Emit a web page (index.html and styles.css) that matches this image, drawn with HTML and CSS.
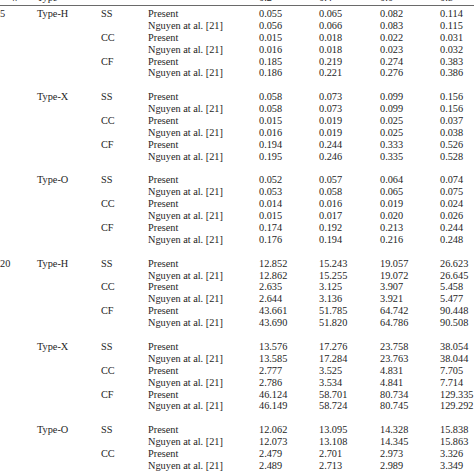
FILE: index.html
```html
<!DOCTYPE html>
<html>
<head>
<meta charset="utf-8">
<link rel="stylesheet" href="styles.css">
</head>
<body>
<div class="table">
  <div class="head">
    <span class="c">w</span><span class="c">Type</span><span class="c"></span><span class="c"></span>
    <span class="c">0.2</span><span class="c">0.4</span><span class="c">0.6</span><span class="c">0.8</span>
  </div>
  <div class="body">
    <span>5</span><span>Type-H</span><span>SS</span><span>Present</span><span>0.055</span><span>0.065</span><span>0.082</span><span>0.114</span>
    <span></span><span></span><span></span><span>Nguyen at al. [21]</span><span>0.056</span><span>0.066</span><span>0.083</span><span>0.115</span>
    <span></span><span></span><span>CC</span><span>Present</span><span>0.015</span><span>0.018</span><span>0.022</span><span>0.031</span>
    <span></span><span></span><span></span><span>Nguyen at al. [21]</span><span>0.016</span><span>0.018</span><span>0.023</span><span>0.032</span>
    <span></span><span></span><span>CF</span><span>Present</span><span>0.185</span><span>0.219</span><span>0.274</span><span>0.383</span>
    <span></span><span></span><span></span><span>Nguyen at al. [21]</span><span>0.186</span><span>0.221</span><span>0.276</span><span>0.386</span>
    <div class="gap"></div>
    <span></span><span>Type-X</span><span>SS</span><span>Present</span><span>0.058</span><span>0.073</span><span>0.099</span><span>0.156</span>
    <span></span><span></span><span></span><span>Nguyen at al. [21]</span><span>0.058</span><span>0.073</span><span>0.099</span><span>0.156</span>
    <span></span><span></span><span>CC</span><span>Present</span><span>0.015</span><span>0.019</span><span>0.025</span><span>0.037</span>
    <span></span><span></span><span></span><span>Nguyen at al. [21]</span><span>0.016</span><span>0.019</span><span>0.025</span><span>0.038</span>
    <span></span><span></span><span>CF</span><span>Present</span><span>0.194</span><span>0.244</span><span>0.333</span><span>0.526</span>
    <span></span><span></span><span></span><span>Nguyen at al. [21]</span><span>0.195</span><span>0.246</span><span>0.335</span><span>0.528</span>
    <div class="gap"></div>
    <span></span><span>Type-O</span><span>SS</span><span>Present</span><span>0.052</span><span>0.057</span><span>0.064</span><span>0.074</span>
    <span></span><span></span><span></span><span>Nguyen at al. [21]</span><span>0.053</span><span>0.058</span><span>0.065</span><span>0.075</span>
    <span></span><span></span><span>CC</span><span>Present</span><span>0.014</span><span>0.016</span><span>0.019</span><span>0.024</span>
    <span></span><span></span><span></span><span>Nguyen at al. [21]</span><span>0.015</span><span>0.017</span><span>0.020</span><span>0.026</span>
    <span></span><span></span><span>CF</span><span>Present</span><span>0.174</span><span>0.192</span><span>0.213</span><span>0.244</span>
    <span></span><span></span><span></span><span>Nguyen at al. [21]</span><span>0.176</span><span>0.194</span><span>0.216</span><span>0.248</span>
    <div class="gap"></div>
    <span>20</span><span>Type-H</span><span>SS</span><span>Present</span><span>12.852</span><span>15.243</span><span>19.057</span><span>26.623</span>
    <span></span><span></span><span></span><span>Nguyen at al. [21]</span><span>12.862</span><span>15.255</span><span>19.072</span><span>26.645</span>
    <span></span><span></span><span>CC</span><span>Present</span><span>2.635</span><span>3.125</span><span>3.907</span><span>5.458</span>
    <span></span><span></span><span></span><span>Nguyen at al. [21]</span><span>2.644</span><span>3.136</span><span>3.921</span><span>5.477</span>
    <span></span><span></span><span>CF</span><span>Present</span><span>43.661</span><span>51.785</span><span>64.742</span><span>90.448</span>
    <span></span><span></span><span></span><span>Nguyen at al. [21]</span><span>43.690</span><span>51.820</span><span>64.786</span><span>90.508</span>
    <div class="gap"></div>
    <span></span><span>Type-X</span><span>SS</span><span>Present</span><span>13.576</span><span>17.276</span><span>23.758</span><span>38.054</span>
    <span></span><span></span><span></span><span>Nguyen at al. [21]</span><span>13.585</span><span>17.284</span><span>23.763</span><span>38.044</span>
    <span></span><span></span><span>CC</span><span>Present</span><span>2.777</span><span>3.525</span><span>4.831</span><span>7.705</span>
    <span></span><span></span><span></span><span>Nguyen at al. [21]</span><span>2.786</span><span>3.534</span><span>4.841</span><span>7.714</span>
    <span></span><span></span><span>CF</span><span>Present</span><span>46.124</span><span>58.701</span><span>80.734</span><span>129.335</span>
    <span></span><span></span><span></span><span>Nguyen at al. [21]</span><span>46.149</span><span>58.724</span><span>80.745</span><span>129.292</span>
    <div class="gap"></div>
    <span></span><span>Type-O</span><span>SS</span><span>Present</span><span>12.062</span><span>13.095</span><span>14.328</span><span>15.838</span>
    <span></span><span></span><span></span><span>Nguyen at al. [21]</span><span>12.073</span><span>13.108</span><span>14.345</span><span>15.863</span>
    <span></span><span></span><span>CC</span><span>Present</span><span>2.479</span><span>2.701</span><span>2.973</span><span>3.326</span>
    <span></span><span></span><span></span><span>Nguyen at al. [21]</span><span>2.489</span><span>2.713</span><span>2.989</span><span>3.349</span>
  </div>
</div>
</body>
</html>
```
FILE: styles.css
```css
html, body {
  margin: 0;
  padding: 0;
  background: #ffffff;
  overflow: hidden;
}
.table {
  width: 474px;
  font-family: "Liberation Serif", "Times New Roman", serif;
  font-size: 10.3px;
  color: #1e1e1e;
  white-space: nowrap;
}
.head, .body {
  display: grid;
  grid-template-columns: 37px 64px 47px 111px 60px 61px 60px 34px;
}
.head {
  height: 5px;
  overflow: hidden;
  border-bottom: 1px solid #6a6a6a;
}
.head .c {
  line-height: 11.9px;
  margin-top: -8px;
}
.head .c:first-child {
  padding-left: 11px;
}
.body {
  grid-auto-rows: 11.9px;
  line-height: 11.9px;
  padding-top: 2px;
}
.gap {
  grid-column: 1 / -1;
}
```
